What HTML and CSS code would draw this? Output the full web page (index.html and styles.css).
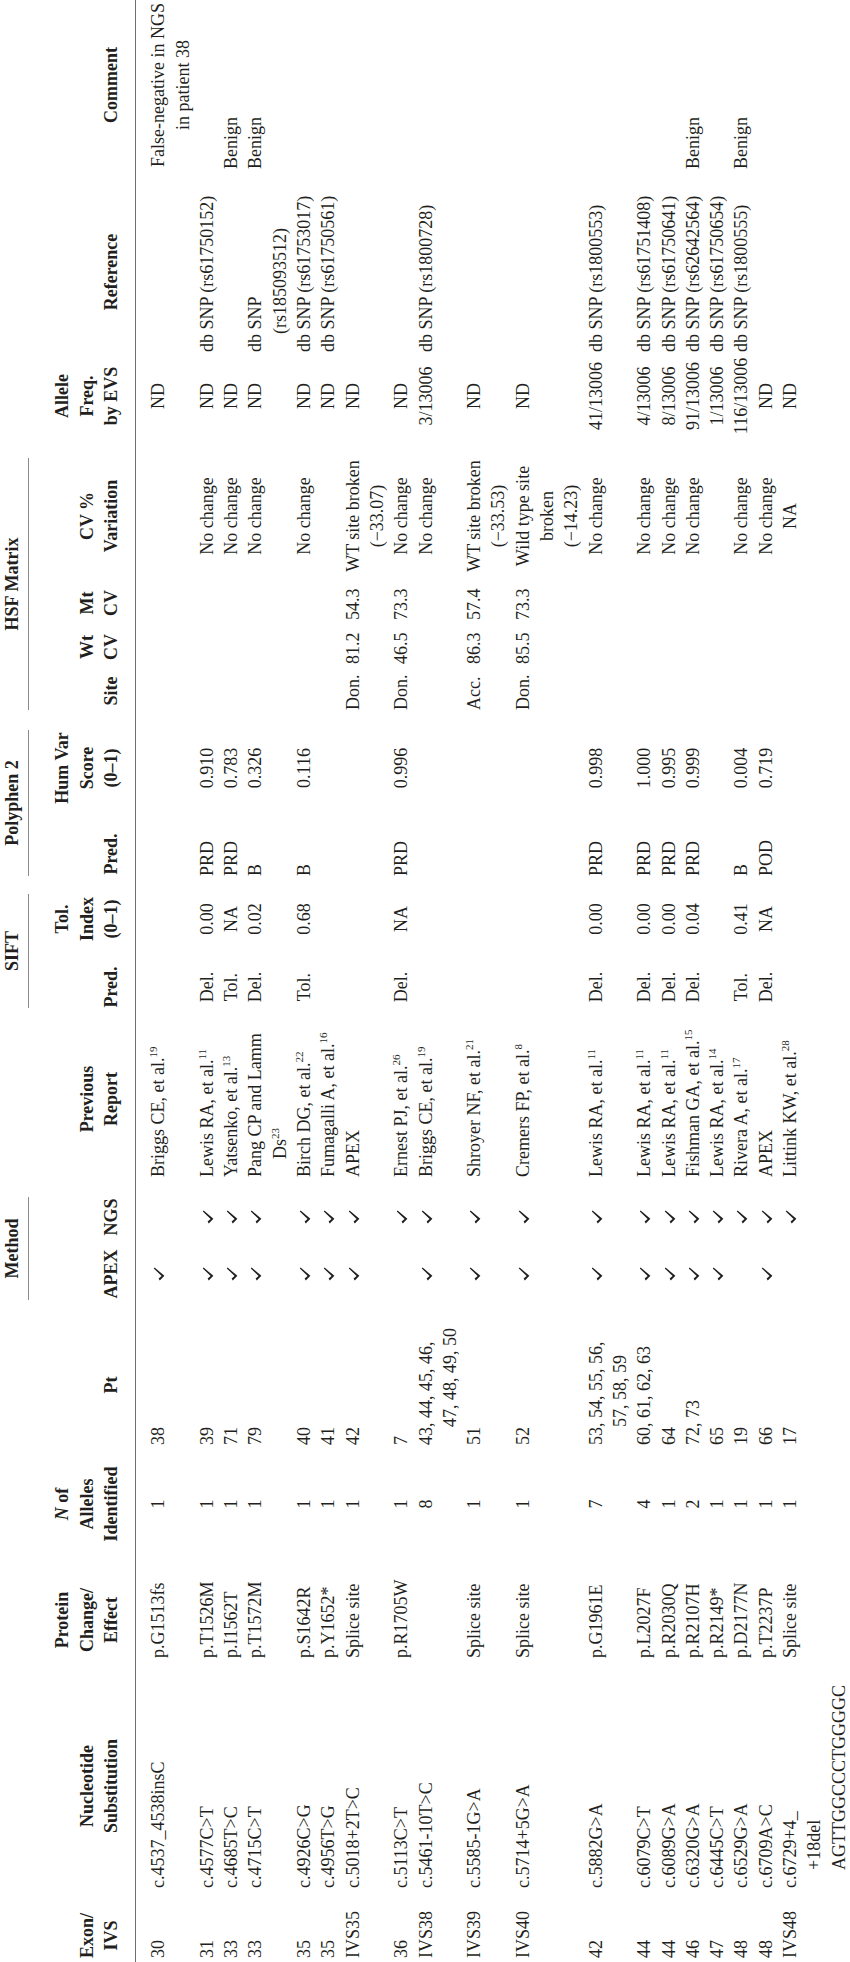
FILE: index.html
```html
<!DOCTYPE html>
<html lang="en">
<head>
<meta charset="utf-8">
<title>ABCA4 variants table</title>
<link rel="stylesheet" href="styles.css">
</head>
<body>
<div class="page">
  <div class="grid thead">
    <div class="r2 k1">Exon/<br>IVS</div>
    <div class="r2 k2">Nucleotide<br>Substitution</div>
    <div class="r2 k3">Protein<br>Change/<br>Effect</div>
    <div class="r2 k4"><i>N</i> of<br>Alleles<br>Identified</div>
    <div class="r2 k5">Pt</div>
    <div class="sp c2 k7"><div class="rule">Method</div></div>
    <div class="r2 k8">Previous<br>Report</div>
    <div class="sp c2 k10"><div class="rule">SIFT</div></div>
    <div class="sp c2 k12"><div class="rule">Polyphen 2</div></div>
    <div class="sp c4 k16"><div class="rule">HSF Matrix</div></div>
    <div class="r2 k17">Allele<br>Freq.<br>by EVS</div>
    <div class="r2 k18">Reference</div>
    <div class="r2 k19">Comment</div>
    <div class="k6">APEX</div>
    <div class="k7">NGS</div>
    <div class="k9">Pred.</div>
    <div class="k10">Tol.<br>Index<br>(0–1)</div>
    <div class="k11">Pred.</div>
    <div class="k12">Hum Var<br>Score<br>(0–1)</div>
    <div class="k13">Site</div>
    <div class="k14">Wt<br>CV</div>
    <div class="k15">Mt<br>CV</div>
    <div class="k16">CV %<br>Variation</div>
  </div>

  <div class="grid tbody">
    <div class="tr">
      <div>30</div><div>c.4537_4538insC</div><div>p.G1513fs</div><div>1</div><div>38</div>
      <div><svg class="ck" viewBox="0 0 14 12"><path d="M0.6 6.8 L2.4 5.6 L5 8.6 L12.6 0.8 L13.4 1.6 L5.3 11.4 Z"/></svg></div><div></div>
      <div>Briggs CE, et al.<sup>19</sup></div>
      <div></div><div></div><div></div><div></div><div></div><div></div><div></div><div></div>
      <div>ND</div><div></div><div class="fn">False-negative in NGS<br>in patient 38</div>
    </div>
    <div class="tr">
      <div>31</div><div>c.4577C&gt;T</div><div>p.T1526M</div><div>1</div><div>39</div>
      <div><svg class="ck" viewBox="0 0 14 12"><path d="M0.6 6.8 L2.4 5.6 L5 8.6 L12.6 0.8 L13.4 1.6 L5.3 11.4 Z"/></svg></div><div><svg class="ck" viewBox="0 0 14 12"><path d="M0.6 6.8 L2.4 5.6 L5 8.6 L12.6 0.8 L13.4 1.6 L5.3 11.4 Z"/></svg></div>
      <div>Lewis RA, et al.<sup>11</sup></div>
      <div>Del.</div><div>0.00</div><div>PRD</div><div>0.910</div><div></div><div></div><div></div><div>No change</div>
      <div>ND</div><div>db SNP (rs61750152)</div><div></div>
    </div>
    <div class="tr">
      <div>33</div><div>c.4685T&gt;C</div><div>p.I1562T</div><div>1</div><div>71</div>
      <div><svg class="ck" viewBox="0 0 14 12"><path d="M0.6 6.8 L2.4 5.6 L5 8.6 L12.6 0.8 L13.4 1.6 L5.3 11.4 Z"/></svg></div><div><svg class="ck" viewBox="0 0 14 12"><path d="M0.6 6.8 L2.4 5.6 L5 8.6 L12.6 0.8 L13.4 1.6 L5.3 11.4 Z"/></svg></div>
      <div>Yatsenko, et al.<sup>13</sup></div>
      <div>Tol.</div><div>NA</div><div>PRD</div><div>0.783</div><div></div><div></div><div></div><div>No change</div>
      <div>ND</div><div></div><div>Benign</div>
    </div>
    <div class="tr">
      <div>33</div><div>c.4715C&gt;T</div><div>p.T1572M</div><div>1</div><div>79</div>
      <div><svg class="ck" viewBox="0 0 14 12"><path d="M0.6 6.8 L2.4 5.6 L5 8.6 L12.6 0.8 L13.4 1.6 L5.3 11.4 Z"/></svg></div><div><svg class="ck" viewBox="0 0 14 12"><path d="M0.6 6.8 L2.4 5.6 L5 8.6 L12.6 0.8 L13.4 1.6 L5.3 11.4 Z"/></svg></div>
      <div>Pang CP and Lamm<div class="ind">Ds<sup>23</sup></div></div>
      <div>Del.</div><div>0.02</div><div>B</div><div>0.326</div><div></div><div></div><div></div><div>No change</div>
      <div>ND</div><div>db SNP<div class="ind">(rs185093512)</div></div><div>Benign</div>
    </div>
    <div class="tr">
      <div>35</div><div>c.4926C&gt;G</div><div>p.S1642R</div><div>1</div><div>40</div>
      <div><svg class="ck" viewBox="0 0 14 12"><path d="M0.6 6.8 L2.4 5.6 L5 8.6 L12.6 0.8 L13.4 1.6 L5.3 11.4 Z"/></svg></div><div><svg class="ck" viewBox="0 0 14 12"><path d="M0.6 6.8 L2.4 5.6 L5 8.6 L12.6 0.8 L13.4 1.6 L5.3 11.4 Z"/></svg></div>
      <div>Birch DG, et al.<sup>22</sup></div>
      <div>Tol.</div><div>0.68</div><div>B</div><div>0.116</div><div></div><div></div><div></div><div>No change</div>
      <div>ND</div><div>db SNP (rs61753017)</div><div></div>
    </div>
    <div class="tr">
      <div>35</div><div>c.4956T&gt;G</div><div>p.Y1652*</div><div>1</div><div>41</div>
      <div><svg class="ck" viewBox="0 0 14 12"><path d="M0.6 6.8 L2.4 5.6 L5 8.6 L12.6 0.8 L13.4 1.6 L5.3 11.4 Z"/></svg></div><div><svg class="ck" viewBox="0 0 14 12"><path d="M0.6 6.8 L2.4 5.6 L5 8.6 L12.6 0.8 L13.4 1.6 L5.3 11.4 Z"/></svg></div>
      <div>Fumagalli A, et al.<sup>16</sup></div>
      <div></div><div></div><div></div><div></div><div></div><div></div><div></div><div></div>
      <div>ND</div><div>db SNP (rs61750561)</div><div></div>
    </div>
    <div class="tr">
      <div>IVS35</div><div>c.5018+2T&gt;C</div><div>Splice site</div><div>1</div><div>42</div>
      <div><svg class="ck" viewBox="0 0 14 12"><path d="M0.6 6.8 L2.4 5.6 L5 8.6 L12.6 0.8 L13.4 1.6 L5.3 11.4 Z"/></svg></div><div><svg class="ck" viewBox="0 0 14 12"><path d="M0.6 6.8 L2.4 5.6 L5 8.6 L12.6 0.8 L13.4 1.6 L5.3 11.4 Z"/></svg></div>
      <div>APEX</div>
      <div></div><div></div><div></div><div></div><div>Don.</div><div>81.2</div><div>54.3</div><div>WT site broken<br>(−33.07)</div>
      <div>ND</div><div></div><div></div>
    </div>
    <div class="tr">
      <div>36</div><div>c.5113C&gt;T</div><div>p.R1705W</div><div>1</div><div>7</div>
      <div></div><div><svg class="ck" viewBox="0 0 14 12"><path d="M0.6 6.8 L2.4 5.6 L5 8.6 L12.6 0.8 L13.4 1.6 L5.3 11.4 Z"/></svg></div>
      <div>Ernest PJ, et al.<sup>26</sup></div>
      <div>Del.</div><div>NA</div><div>PRD</div><div>0.996</div><div>Don.</div><div>46.5</div><div>73.3</div><div>No change</div>
      <div>ND</div><div></div><div></div>
    </div>
    <div class="tr">
      <div>IVS38</div><div>c.5461-10T&gt;C</div><div></div><div>8</div><div>43, 44, 45, 46,<div class="ind">47, 48, 49, 50</div></div>
      <div><svg class="ck" viewBox="0 0 14 12"><path d="M0.6 6.8 L2.4 5.6 L5 8.6 L12.6 0.8 L13.4 1.6 L5.3 11.4 Z"/></svg></div><div><svg class="ck" viewBox="0 0 14 12"><path d="M0.6 6.8 L2.4 5.6 L5 8.6 L12.6 0.8 L13.4 1.6 L5.3 11.4 Z"/></svg></div>
      <div>Briggs CE, et al.<sup>19</sup></div>
      <div></div><div></div><div></div><div></div><div></div><div></div><div></div><div>No change</div>
      <div>3/13006</div><div>db SNP (rs1800728)</div><div></div>
    </div>
    <div class="tr">
      <div>IVS39</div><div>c.5585-1G&gt;A</div><div>Splice site</div><div>1</div><div>51</div>
      <div><svg class="ck" viewBox="0 0 14 12"><path d="M0.6 6.8 L2.4 5.6 L5 8.6 L12.6 0.8 L13.4 1.6 L5.3 11.4 Z"/></svg></div><div><svg class="ck" viewBox="0 0 14 12"><path d="M0.6 6.8 L2.4 5.6 L5 8.6 L12.6 0.8 L13.4 1.6 L5.3 11.4 Z"/></svg></div>
      <div>Shroyer NF, et al.<sup>21</sup></div>
      <div></div><div></div><div></div><div></div><div>Acc.</div><div>86.3</div><div>57.4</div><div>WT site broken<br>(−33.53)</div>
      <div>ND</div><div></div><div></div>
    </div>
    <div class="tr">
      <div>IVS40</div><div>c.5714+5G&gt;A</div><div>Splice site</div><div>1</div><div>52</div>
      <div><svg class="ck" viewBox="0 0 14 12"><path d="M0.6 6.8 L2.4 5.6 L5 8.6 L12.6 0.8 L13.4 1.6 L5.3 11.4 Z"/></svg></div><div><svg class="ck" viewBox="0 0 14 12"><path d="M0.6 6.8 L2.4 5.6 L5 8.6 L12.6 0.8 L13.4 1.6 L5.3 11.4 Z"/></svg></div>
      <div>Cremers FP, et al.<sup>8</sup></div>
      <div></div><div></div><div></div><div></div><div>Don.</div><div>85.5</div><div>73.3</div><div>Wild type site<br>broken<br>(−14.23)</div>
      <div>ND</div><div></div><div></div>
    </div>
    <div class="tr">
      <div>42</div><div>c.5882G&gt;A</div><div>p.G1961E</div><div>7</div><div>53, 54, 55, 56,<div class="ind">57, 58, 59</div></div>
      <div><svg class="ck" viewBox="0 0 14 12"><path d="M0.6 6.8 L2.4 5.6 L5 8.6 L12.6 0.8 L13.4 1.6 L5.3 11.4 Z"/></svg></div><div><svg class="ck" viewBox="0 0 14 12"><path d="M0.6 6.8 L2.4 5.6 L5 8.6 L12.6 0.8 L13.4 1.6 L5.3 11.4 Z"/></svg></div>
      <div>Lewis RA, et al.<sup>11</sup></div>
      <div>Del.</div><div>0.00</div><div>PRD</div><div>0.998</div><div></div><div></div><div></div><div>No change</div>
      <div>41/13006</div><div>db SNP (rs1800553)</div><div></div>
    </div>
    <div class="tr">
      <div>44</div><div>c.6079C&gt;T</div><div>p.L2027F</div><div>4</div><div>60, 61, 62, 63</div>
      <div><svg class="ck" viewBox="0 0 14 12"><path d="M0.6 6.8 L2.4 5.6 L5 8.6 L12.6 0.8 L13.4 1.6 L5.3 11.4 Z"/></svg></div><div><svg class="ck" viewBox="0 0 14 12"><path d="M0.6 6.8 L2.4 5.6 L5 8.6 L12.6 0.8 L13.4 1.6 L5.3 11.4 Z"/></svg></div>
      <div>Lewis RA, et al.<sup>11</sup></div>
      <div>Del.</div><div>0.00</div><div>PRD</div><div>1.000</div><div></div><div></div><div></div><div>No change</div>
      <div>4/13006</div><div>db SNP (rs61751408)</div><div></div>
    </div>
    <div class="tr">
      <div>44</div><div>c.6089G&gt;A</div><div>p.R2030Q</div><div>1</div><div>64</div>
      <div><svg class="ck" viewBox="0 0 14 12"><path d="M0.6 6.8 L2.4 5.6 L5 8.6 L12.6 0.8 L13.4 1.6 L5.3 11.4 Z"/></svg></div><div><svg class="ck" viewBox="0 0 14 12"><path d="M0.6 6.8 L2.4 5.6 L5 8.6 L12.6 0.8 L13.4 1.6 L5.3 11.4 Z"/></svg></div>
      <div>Lewis RA, et al.<sup>11</sup></div>
      <div>Del.</div><div>0.00</div><div>PRD</div><div>0.995</div><div></div><div></div><div></div><div>No change</div>
      <div>8/13006</div><div>db SNP (rs61750641)</div><div></div>
    </div>
    <div class="tr">
      <div>46</div><div>c.6320G&gt;A</div><div>p.R2107H</div><div>2</div><div>72, 73</div>
      <div><svg class="ck" viewBox="0 0 14 12"><path d="M0.6 6.8 L2.4 5.6 L5 8.6 L12.6 0.8 L13.4 1.6 L5.3 11.4 Z"/></svg></div><div><svg class="ck" viewBox="0 0 14 12"><path d="M0.6 6.8 L2.4 5.6 L5 8.6 L12.6 0.8 L13.4 1.6 L5.3 11.4 Z"/></svg></div>
      <div>Fishman GA, et al.<sup>15</sup></div>
      <div>Del.</div><div>0.04</div><div>PRD</div><div>0.999</div><div></div><div></div><div></div><div>No change</div>
      <div>91/13006</div><div>db SNP (rs62642564)</div><div>Benign</div>
    </div>
    <div class="tr">
      <div>47</div><div>c.6445C&gt;T</div><div>p.R2149*</div><div>1</div><div>65</div>
      <div><svg class="ck" viewBox="0 0 14 12"><path d="M0.6 6.8 L2.4 5.6 L5 8.6 L12.6 0.8 L13.4 1.6 L5.3 11.4 Z"/></svg></div><div><svg class="ck" viewBox="0 0 14 12"><path d="M0.6 6.8 L2.4 5.6 L5 8.6 L12.6 0.8 L13.4 1.6 L5.3 11.4 Z"/></svg></div>
      <div>Lewis RA, et al.<sup>14</sup></div>
      <div></div><div></div><div></div><div></div><div></div><div></div><div></div><div></div>
      <div>1/13006</div><div>db SNP (rs61750654)</div><div></div>
    </div>
    <div class="tr">
      <div>48</div><div>c.6529G&gt;A</div><div>p.D2177N</div><div>1</div><div>19</div>
      <div></div><div><svg class="ck" viewBox="0 0 14 12"><path d="M0.6 6.8 L2.4 5.6 L5 8.6 L12.6 0.8 L13.4 1.6 L5.3 11.4 Z"/></svg></div>
      <div>Rivera A, et al.<sup>17</sup></div>
      <div>Tol.</div><div>0.41</div><div>B</div><div>0.004</div><div></div><div></div><div></div><div>No change</div>
      <div>116/13006</div><div>db SNP (rs1800555)</div><div>Benign</div>
    </div>
    <div class="tr">
      <div>48</div><div>c.6709A&gt;C</div><div>p.T2237P</div><div>1</div><div>66</div>
      <div><svg class="ck" viewBox="0 0 14 12"><path d="M0.6 6.8 L2.4 5.6 L5 8.6 L12.6 0.8 L13.4 1.6 L5.3 11.4 Z"/></svg></div><div><svg class="ck" viewBox="0 0 14 12"><path d="M0.6 6.8 L2.4 5.6 L5 8.6 L12.6 0.8 L13.4 1.6 L5.3 11.4 Z"/></svg></div>
      <div>APEX</div>
      <div>Del.</div><div>NA</div><div>POD</div><div>0.719</div><div></div><div></div><div></div><div>No change</div>
      <div>ND</div><div></div><div></div>
    </div>
    <div class="tr">
      <div>IVS48</div><div>c.6729+4_<div class="ind">+18del</div><div class="ind">AGTTGGCCCTGGGGC</div></div><div>Splice site</div><div>1</div><div>17</div>
      <div></div><div><svg class="ck" viewBox="0 0 14 12"><path d="M0.6 6.8 L2.4 5.6 L5 8.6 L12.6 0.8 L13.4 1.6 L5.3 11.4 Z"/></svg></div>
      <div>Littink KW, et al.<sup>28</sup></div>
      <div></div><div></div><div></div><div></div><div></div><div></div><div></div><div>NA</div>
      <div>ND</div><div></div><div></div>
    </div>
  </div>
</div>
</body>
</html>
```

FILE: styles.css
```css
html, body {
  margin: 0;
  padding: 0;
  width: 850px;
  height: 1962px;
  overflow: hidden;
  background: #ffffff;
}

/* The whole table is typeset landscape and turned a quarter turn to the left */
.page {
  width: 1962px;
  height: 850px;
  overflow: hidden;
  transform-origin: 0 0;
  transform: translateY(1962px) rotate(-90deg);
  font-family: "Liberation Serif", "Times New Roman", serif;
  font-size: 18px;
  line-height: 24.3px;
  color: #231f20;
}

.grid {
  display: grid;
  grid-template-columns: 70px 230px 106px 107px 145px 63px 60px 169px 64px 68px 70px 96px 46px 44px 46px 139px 83px 183px 168px;
  padding-left: 4px;
}

/* header */
.thead {
  grid-template-rows: 29.3px 106px;
  padding-top: 0;
  border-bottom: 1px solid #707070;
  font-weight: bold;
}
.thead > div {
  align-self: end;
  padding-bottom: 12px;
  text-align: center;
  white-space: nowrap;
}
.thead > .sp {
  align-self: start;
  padding-bottom: 0;
}
.sp .rule {
  border-bottom: 1px solid #8c8c8c;
  padding-bottom: 4px;
}
.r2 { grid-row: span 2; }
.c2 { grid-column: span 2; }
.c4 { grid-column: span 4; }

/* body */
.tbody {
  padding-top: 10px;
}
.tr {
  display: contents;
}
.tr > div {
  white-space: nowrap;
  text-align: left;
}

/* column gaps (trailing space of each column) */
.tr > :nth-child(1),  .k1  { padding-right: 25px; }
.tr > :nth-child(2),  .k2  { padding-right: 26px; }
.tr > :nth-child(3),  .k3  { padding-right: 30px; }
.tr > :nth-child(4),  .k4  { padding-right: 11px; }
.tr > :nth-child(5),  .k5  { padding-right: 25px; }
.tr > :nth-child(6),  .k6  { padding-right: 11px; }
.tr > :nth-child(7),  .k7  { padding-right: 20px; }
.tr > :nth-child(8),  .k8  { padding-right: 13px; }
.tr > :nth-child(9),  .k9  { padding-right: 22px; }
.tr > :nth-child(10), .k10 { padding-right: 18px; }
.tr > :nth-child(11), .k11 { padding-right: 26px; }
.tr > :nth-child(12), .k12 { padding-right: 20px; }
.tr > :nth-child(13), .k13 { padding-right: 8px; }
.tr > :nth-child(14), .k14 { padding-right: 10px; }
.tr > :nth-child(15), .k15 { padding-right: 12px; }
.tr > :nth-child(16), .k16 { padding-right: 23px; }
.tr > :nth-child(17), .k17 { padding-right: 5px; }
.tr > :nth-child(18), .k18 { padding-right: 23px; }
.tr > :nth-child(19), .k19 { padding-right: 0; }

/* centred data columns */
.tr > :nth-child(4),
.tr > :nth-child(6),
.tr > :nth-child(7),
.tr > :nth-child(9),
.tr > :nth-child(10),
.tr > :nth-child(12),
.tr > :nth-child(16),
.tr > :nth-child(17) {
  text-align: center;
}
.tr > .fn {
  text-align: center;
}

.ind {
  padding-left: 18px;
}

sup {
  font-size: 11px;
  line-height: 0;
  vertical-align: 7px;
}

.ck {
  width: 14px;
  height: 12px;
  fill: #231f20;
  vertical-align: -1px;
}
```
